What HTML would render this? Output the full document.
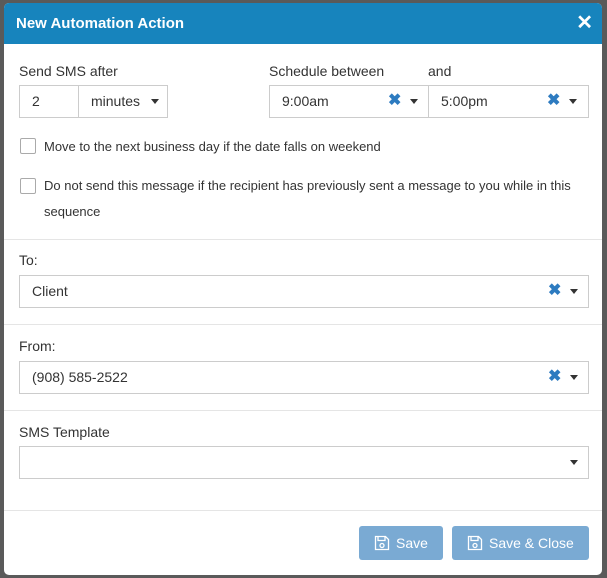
<!DOCTYPE html><html><head><style>
body{margin:0;width:607px;height:578px;background:#5a5a5a;font-family:"Liberation Sans",sans-serif;overflow:hidden;position:relative;color:#333}
.m{position:absolute;left:4px;top:3px;width:598px;height:572px;background:#fff;border-radius:5px;overflow:hidden}
.h{background:#1784bd;height:41px;color:#fff;font-weight:bold;font-size:15px;line-height:41px;padding-left:12px;position:relative}
.x{position:absolute;right:9px;top:0;font-size:20px}
.l{position:absolute;font-size:14px;color:#333}
.b{position:absolute;border:1px solid #ccc;height:32px;box-sizing:border-box;font-size:14px;line-height:30px;padding-left:12px;background:#fff}
.c{position:absolute;color:#2d7bc0;font-weight:bold;font-size:16px;top:0}
.a{position:absolute;width:0;height:0;border-left:4px solid transparent;border-right:4px solid transparent;border-top:5px solid #333;top:13px}
.cb{position:absolute;width:16px;height:16px;border:1px solid #aaa;border-radius:2px;box-sizing:border-box}
.hr{position:absolute;left:0;right:0;height:1px;background:#e5e5e5}
.btn{position:absolute;top:523px;height:34px;background:#7aaad3;border-radius:3px;color:#fff;font-size:14px;line-height:34px;box-sizing:border-box}
</style></head><body>
<div class="m">
<div class="h">New Automation Action<span class="x">✕</span></div>
<div class="l" style="left:15px;top:60px">Send SMS after</div>
<div class="l" style="left:265px;top:60px">Schedule between</div>
<div class="l" style="left:424px;top:60px">and</div>
<div class="b" style="left:15px;top:82px;width:60px;height:33px">2</div>
<div class="b" style="left:74px;top:82px;width:90px;height:33px">minutes<span class="a" style="left:72px"></span></div>
<div class="b" style="left:265px;top:82px;width:161px;height:33px">9:00am<span class="c" style="left:118px">✖</span><span class="a" style="left:140px"></span></div>
<div class="b" style="left:424px;top:82px;width:161px;height:33px">5:00pm<span class="c" style="left:118px">✖</span><span class="a" style="left:140px"></span></div>
<div class="cb" style="left:16px;top:135px"></div>
<div class="l" style="left:40px;top:136px;font-size:13px">Move to the next business day if the date falls on weekend</div>
<div class="cb" style="left:16px;top:175px"></div>
<div class="l" style="left:40px;top:176px;font-size:13px;line-height:26px;width:540px;top:170px">Do not send this message if the recipient has previously sent a message to you while in this sequence</div>
<div class="hr" style="top:236px"></div>
<div class="l" style="left:15px;top:249px">To:</div>
<div class="b" style="left:15px;top:272px;width:570px;height:33px">Client<span class="c" style="left:528px">✖</span><span class="a" style="left:550px"></span></div>
<div class="hr" style="top:321px"></div>
<div class="l" style="left:15px;top:335px">From:</div>
<div class="b" style="left:15px;top:358px;width:570px;height:33px">(908) 585-2522<span class="c" style="left:528px">✖</span><span class="a" style="left:550px"></span></div>
<div class="hr" style="top:407px"></div>
<div class="l" style="left:15px;top:421px">SMS Template</div>
<div class="b" style="left:15px;top:443px;width:570px;height:33px"><span class="a" style="left:550px"></span></div>
<div class="hr" style="top:507px"></div>
<div class="btn" style="left:355px;width:84px;padding-left:15px"><svg width="16" height="16" viewBox="0 0 16 16" style="vertical-align:-3px;margin-right:6px"><path d="M1.5 1.5h10l3 3v10h-13z" fill="none" stroke="#fff" stroke-width="1.3"/><path d="M4 1.5v4h7v-4" fill="none" stroke="#fff" stroke-width="1.3"/><circle cx="8" cy="10.5" r="2" fill="none" stroke="#fff" stroke-width="1.3"/></svg>Save</div>
<div class="btn" style="left:448px;width:137px;padding-left:15px"><svg width="16" height="16" viewBox="0 0 16 16" style="vertical-align:-3px;margin-right:6px"><path d="M1.5 1.5h10l3 3v10h-13z" fill="none" stroke="#fff" stroke-width="1.3"/><path d="M4 1.5v4h7v-4" fill="none" stroke="#fff" stroke-width="1.3"/><circle cx="8" cy="10.5" r="2" fill="none" stroke="#fff" stroke-width="1.3"/></svg>Save &amp; Close</div>
</div>
</body></html>
